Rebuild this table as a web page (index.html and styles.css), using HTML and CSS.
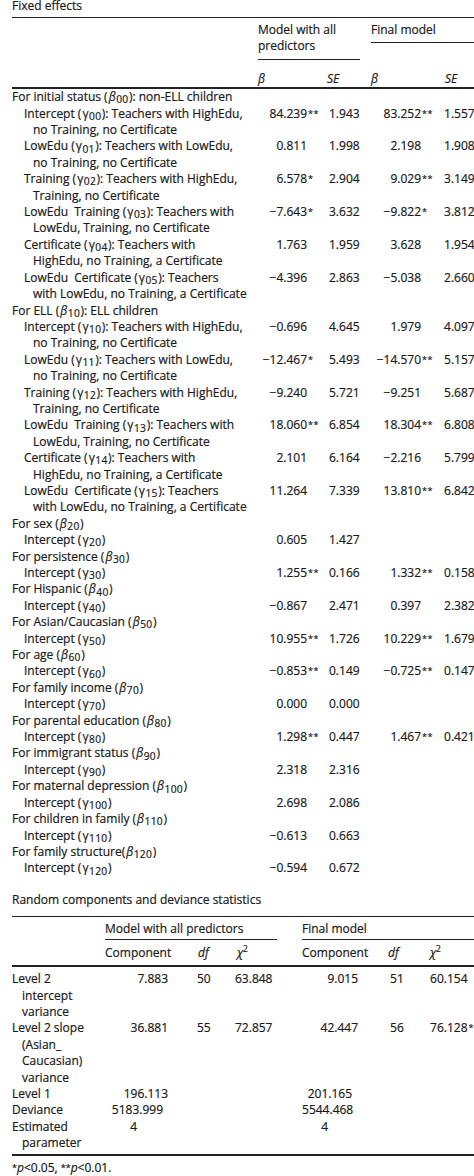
FILE: index.html
```html
<!DOCTYPE html>
<html lang="en">
<head>
<meta charset="utf-8">
<title>Fixed effects</title>
<link rel="stylesheet" href="styles.css">
</head>
<body>
<div class="page">
  <div class="title first">Fixed effects</div>
  <table class="fx">
    <colgroup>
      <col class="c-label"><col class="c-b1"><col class="c-se1"><col class="c-b2"><col class="c-se2">
    </colgroup>
    <thead>
      <tr class="h1">
        <th></th>
        <th colspan="2"><div class="span-head mid">Model with all<br>predictors</div></th>
        <th colspan="2"><div class="span-head">Final model</div></th>
      </tr>
      <tr class="h2">
        <th></th>
        <th><i>β</i></th>
        <th class="se1"><i>SE</i></th>
        <th><i>β</i></th>
        <th class="se2"><i>SE</i></th>
      </tr>
    </thead>
    <tbody>
      <tr><td class="grp">For initial status (<i class="g">β</i><sub>00</sub>): non-ELL children</td><td></td><td></td><td></td><td></td></tr>
      <tr><td class="item">Intercept (<span class="g">γ</span><sub>00</sub>): Teachers with HighEdu,<br>no Training, no Certificate</td><td class="b1">84.239<span class="s">**</span></td><td class="se1">1.943</td><td class="b2">83.252<span class="s">**</span></td><td class="se2">1.557</td></tr>
      <tr><td class="item">LowEdu (<span class="g">γ</span><sub>01</sub>): Teachers with LowEdu,<br>no Training, no Certificate</td><td class="b1">0.811<span class="s"></span></td><td class="se1">1.998</td><td class="b2">2.198<span class="s"></span></td><td class="se2">1.908</td></tr>
      <tr><td class="item">Training (<span class="g">γ</span><sub>02</sub>): Teachers with HighEdu,<br>Training, no Certificate</td><td class="b1">6.578<span class="s">*</span></td><td class="se1">2.904</td><td class="b2">9.029<span class="s">**</span></td><td class="se2">3.149</td></tr>
      <tr><td class="item">LowEdu&ensp;Training (<span class="g">γ</span><sub>03</sub>): Teachers with<br>LowEdu, Training, no Certificate</td><td class="b1">−7.643<span class="s">*</span></td><td class="se1">3.632</td><td class="b2">−9.822<span class="s">*</span></td><td class="se2">3.812</td></tr>
      <tr><td class="item">Certificate (<span class="g">γ</span><sub>04</sub>): Teachers with<br>HighEdu, no Training, a Certificate</td><td class="b1">1.763<span class="s"></span></td><td class="se1">1.959</td><td class="b2">3.628<span class="s"></span></td><td class="se2">1.954</td></tr>
      <tr><td class="item">LowEdu&ensp;Certificate (<span class="g">γ</span><sub>05</sub>): Teachers<br>with LowEdu, no Training, a Certificate</td><td class="b1">−4.396<span class="s"></span></td><td class="se1">2.863</td><td class="b2">−5.038<span class="s"></span></td><td class="se2">2.660</td></tr>
      <tr><td class="grp">For ELL (<i class="g">β</i><sub>10</sub>): ELL children</td><td></td><td></td><td></td><td></td></tr>
      <tr><td class="item">Intercept (<span class="g">γ</span><sub>10</sub>): Teachers with HighEdu,<br>no Training, no Certificate</td><td class="b1">−0.696<span class="s"></span></td><td class="se1">4.645</td><td class="b2">1.979<span class="s"></span></td><td class="se2">4.097</td></tr>
      <tr><td class="item">LowEdu (<span class="g">γ</span><sub>11</sub>): Teachers with LowEdu,<br>no Training, no Certificate</td><td class="b1">−12.467<span class="s">*</span></td><td class="se1">5.493</td><td class="b2">−14.570<span class="s">**</span></td><td class="se2">5.157</td></tr>
      <tr><td class="item">Training (<span class="g">γ</span><sub>12</sub>): Teachers with HighEdu,<br>Training, no Certificate</td><td class="b1">−9.240<span class="s"></span></td><td class="se1">5.721</td><td class="b2">−9.251<span class="s"></span></td><td class="se2">5.687</td></tr>
      <tr><td class="item">LowEdu&ensp;Training (<span class="g">γ</span><sub>13</sub>): Teachers with<br>LowEdu, Training, no Certificate</td><td class="b1">18.060<span class="s">**</span></td><td class="se1">6.854</td><td class="b2">18.304<span class="s">**</span></td><td class="se2">6.808</td></tr>
      <tr><td class="item">Certificate (<span class="g">γ</span><sub>14</sub>): Teachers with<br>HighEdu, no Training, a Certificate</td><td class="b1">2.101<span class="s"></span></td><td class="se1">6.164</td><td class="b2">−2.216<span class="s"></span></td><td class="se2">5.799</td></tr>
      <tr><td class="item">LowEdu&ensp;Certificate (<span class="g">γ</span><sub>15</sub>): Teachers<br>with LowEdu, no Training, a Certificate</td><td class="b1">11.264<span class="s"></span></td><td class="se1">7.339</td><td class="b2">13.810<span class="s">**</span></td><td class="se2">6.842</td></tr>
      <tr><td class="grp">For sex (<i class="g">β</i><sub>20</sub>)</td><td></td><td></td><td></td><td></td></tr>
      <tr><td class="item">Intercept (<span class="g">γ</span><sub>20</sub>)</td><td class="b1">0.605<span class="s"></span></td><td class="se1">1.427</td><td></td><td></td></tr>
      <tr><td class="grp">For persistence (<i class="g">β</i><sub>30</sub>)</td><td></td><td></td><td></td><td></td></tr>
      <tr><td class="item">Intercept (<span class="g">γ</span><sub>30</sub>)</td><td class="b1">1.255<span class="s">**</span></td><td class="se1">0.166</td><td class="b2">1.332<span class="s">**</span></td><td class="se2">0.158</td></tr>
      <tr><td class="grp">For Hispanic (<i class="g">β</i><sub>40</sub>)</td><td></td><td></td><td></td><td></td></tr>
      <tr><td class="item">Intercept (<span class="g">γ</span><sub>40</sub>)</td><td class="b1">−0.867<span class="s"></span></td><td class="se1">2.471</td><td class="b2">0.397<span class="s"></span></td><td class="se2">2.382</td></tr>
      <tr><td class="grp">For Asian/Caucasian (<i class="g">β</i><sub>50</sub>)</td><td></td><td></td><td></td><td></td></tr>
      <tr><td class="item">Intercept (<span class="g">γ</span><sub>50</sub>)</td><td class="b1">10.955<span class="s">**</span></td><td class="se1">1.726</td><td class="b2">10.229<span class="s">**</span></td><td class="se2">1.679</td></tr>
      <tr><td class="grp">For age (<i class="g">β</i><sub>60</sub>)</td><td></td><td></td><td></td><td></td></tr>
      <tr><td class="item">Intercept (<span class="g">γ</span><sub>60</sub>)</td><td class="b1">−0.853<span class="s">**</span></td><td class="se1">0.149</td><td class="b2">−0.725<span class="s">**</span></td><td class="se2">0.147</td></tr>
      <tr><td class="grp">For family income (<i class="g">β</i><sub>70</sub>)</td><td></td><td></td><td></td><td></td></tr>
      <tr><td class="item">Intercept (<span class="g">γ</span><sub>70</sub>)</td><td class="b1">0.000<span class="s"></span></td><td class="se1">0.000</td><td></td><td></td></tr>
      <tr><td class="grp">For parental education (<i class="g">β</i><sub>80</sub>)</td><td></td><td></td><td></td><td></td></tr>
      <tr><td class="item">Intercept (<span class="g">γ</span><sub>80</sub>)</td><td class="b1">1.298<span class="s">**</span></td><td class="se1">0.447</td><td class="b2">1.467<span class="s">**</span></td><td class="se2">0.421</td></tr>
      <tr><td class="grp">For immigrant status (<i class="g">β</i><sub>90</sub>)</td><td></td><td></td><td></td><td></td></tr>
      <tr><td class="item">Intercept (<span class="g">γ</span><sub>90</sub>)</td><td class="b1">2.318<span class="s"></span></td><td class="se1">2.316</td><td></td><td></td></tr>
      <tr><td class="grp">For maternal depression (<i class="g">β</i><sub>100</sub>)</td><td></td><td></td><td></td><td></td></tr>
      <tr><td class="item">Intercept (<span class="g">γ</span><sub>100</sub>)</td><td class="b1">2.698<span class="s"></span></td><td class="se1">2.086</td><td></td><td></td></tr>
      <tr><td class="grp">For children in family (<i class="g">β</i><sub>110</sub>)</td><td></td><td></td><td></td><td></td></tr>
      <tr><td class="item">Intercept (<span class="g">γ</span><sub>110</sub>)</td><td class="b1">−0.613<span class="s"></span></td><td class="se1">0.663</td><td></td><td></td></tr>
      <tr><td class="grp">For family structure(<i class="g">β</i><sub>120</sub>)</td><td></td><td></td><td></td><td></td></tr>
      <tr><td class="item">Intercept (<span class="g">γ</span><sub>120</sub>)</td><td class="b1">−0.594<span class="s"></span></td><td class="se1">0.672</td><td></td><td></td></tr>
    </tbody>
  </table>

  <div class="title second">Random components and deviance statistics</div>
  <table class="rc">
    <colgroup>
      <col class="r-label"><col class="r-c1"><col class="r-d1"><col class="r-x1"><col class="r-c2"><col class="r-d2"><col class="r-x2">
    </colgroup>
    <thead>
      <tr class="h1">
        <th></th>
        <th colspan="3"><div class="span-head mid2">Model with all predictors</div></th>
        <th colspan="3"><div class="span-head">Final model</div></th>
      </tr>
      <tr class="h2">
        <th></th>
        <th>Component</th>
        <th class="d"><i>df</i></th>
        <th class="x"><i>χ</i><sup>2</sup></th>
        <th>Component</th>
        <th class="d2"><i>df</i></th>
        <th class="x2"><i>χ</i><sup>2</sup></th>
      </tr>
    </thead>
    <tbody>
      <tr><td class="lab">Level 2<br>intercept<br>variance</td><td class="c1">7.883</td><td class="d">50</td><td class="x">63.848</td><td class="c2">9.015</td><td class="d2">51</td><td class="x2">60.154</td></tr>
      <tr><td class="lab">Level 2 slope<br>(Asian_<br>Caucasian)<br>variance</td><td class="c1">36.881</td><td class="d">55</td><td class="x">72.857</td><td class="c2">42.447</td><td class="d2">56</td><td class="x2">76.128<span class="s2">*</span></td></tr>
      <tr><td class="lab">Level 1</td><td class="c1">196.113</td><td></td><td></td><td class="c2 nar">201.165</td><td></td><td></td></tr>
      <tr><td class="lab">Deviance</td><td class="c1 dev">5183.999</td><td></td><td></td><td class="c2 nar">5544.468</td><td></td><td></td></tr>
      <tr class="last"><td class="lab">Estimated<br>parameter</td><td class="c1 one">4</td><td></td><td></td><td class="c2 one2">4</td><td></td><td></td></tr>
    </tbody>
  </table>
  <div class="note"><span class="ast">*</span><i>p</i>&lt;0.05, <span class="ast">**</span><i>p</i>&lt;0.01.</div>
</div>
</body>
</html>
```

FILE: styles.css
```css
html, body {
  margin: 0;
  padding: 0;
  background: #ffffff;
  overflow: hidden;
}

body {
  font-family: "Open Sans", "DejaVu Sans", sans-serif;
  font-size: 12px;
  color: #1a1a1a;
  -webkit-text-stroke: 0.2px #1a1a1a;
}

.page {
  width: 462px;
  padding-left: 12px;
  overflow: hidden;
}

.title {
  line-height: 12px;
  height: 12px;
  white-space: nowrap;
}

.title.first {
  margin-top: 0;
  margin-bottom: 5px;
}

.title.second {
  line-height: 16.4px;
  height: 16.4px;
  margin-top: 15px;
  margin-bottom: 8px;
}

table {
  border-collapse: separate;
  border-spacing: 0;
  table-layout: fixed;
}

th, td {
  padding: 0;
  font-weight: normal;
  text-align: left;
  vertical-align: top;
  line-height: 16.4px;
  white-space: nowrap;
}

i { font-style: italic; }

.g {
  margin-left: 1px;
  margin-right: 0.5px;
}

sub {
  font-size: 0.85em;
  line-height: 0;
  vertical-align: -0.22em;
  letter-spacing: 0.3px;
  margin-right: 0.5px;
}

sup {
  font-size: 0.7em;
  line-height: 0;
  vertical-align: 0.55em;
}

/* ---------- Fixed effects table ---------- */
.fx {
  width: 488px;
  border-top: 1px solid #222;
}

.c-label { width: 246px; }
.c-b1 { width: 68px; }
.c-se1 { width: 45px; }
.c-b2 { width: 71px; }
.c-se2 { width: 58px; }

.fx .h1 th {
  padding-top: 4px;
}

.span-head {
  border-bottom: 1px solid #222;
  padding-bottom: 4px;
}

.span-head.mid {
  margin-right: 11px;
}

.fx .h2 th {
  padding-top: 11px;
  border-bottom: 2px solid #222;
}

.fx .h2 th.se1 { padding-left: 1px; }
.fx .h2 th.se2 { padding-left: 3px; }

.grp {
  padding-left: 0;
}

.item {
  padding-left: 21px;
  text-indent: -9px;
}

.b1 {
  text-align: right;
  padding-right: 8px;
}

.b2 {
  text-align: right;
  padding-right: 10px;
}

.s {
  display: inline-block;
  width: 11px;
  text-align: left;
  text-indent: 1px;
  font-size: 9px;
  vertical-align: 1px;
  letter-spacing: 0.5px;
}

td.se1 { padding-left: 3px; }
td.se2 { padding-left: 2px; }

/* ---------- Random components table ---------- */
.rc {
  width: 462px;
  border-top: 1px solid #222;
  border-bottom: 2px solid #222;
}

.r-label { width: 93px; }
.r-c1 { width: 85px; }
.r-d1 { width: 40px; }
.r-x1 { width: 72px; }
.r-c2 { width: 83px; }
.r-d2 { width: 40px; }
.r-x2 { width: 49px; }

.rc .h1 th {
  padding-top: 4px;
}

.rc .span-head {
  padding-bottom: 1.6px;
}

.span-head.mid2 {
  margin-right: 25px;
}

.rc .h2 th {
  padding-top: 5px;
  padding-bottom: 3.6px;
  border-bottom: 2px solid #222;
}

.rc th.d { padding-left: 8px; }
.rc th.x { padding-left: 7px; }
.rc th.d2 { padding-left: 3px; }
.rc th.x2 { padding-left: 5px; }

.rc tbody tr:first-child td {
  padding-top: 4px;
}

.rc tbody tr.last td {
  padding-bottom: 2px;
}

.lab {
  padding-left: 10px;
  text-indent: -10px;
}

td.c1 {
  text-align: right;
  padding-right: 22px;
}

td.c1.dev { padding-right: 27px; }
td.c1.one { padding-right: 53px; }

td.c2 {
  text-align: right;
  padding-right: 27px;
}

td.c2.nar { padding-right: 33px; }
td.c2.one2 { padding-right: 57px; }

.rc td.d { padding-left: 7px; }
.rc td.x { padding-left: 5px; }
.rc td.d2 { padding-left: 5px; }
.rc td.x2 { padding-left: 5px; }

.s2 {
  margin-left: 1px;
  font-size: 9px;
  vertical-align: 1px;
}

.note {
  margin-top: 4px;
  line-height: 16.4px;
  white-space: nowrap;
}

.ast {
  font-size: 9px;
  vertical-align: 1px;
}
```
